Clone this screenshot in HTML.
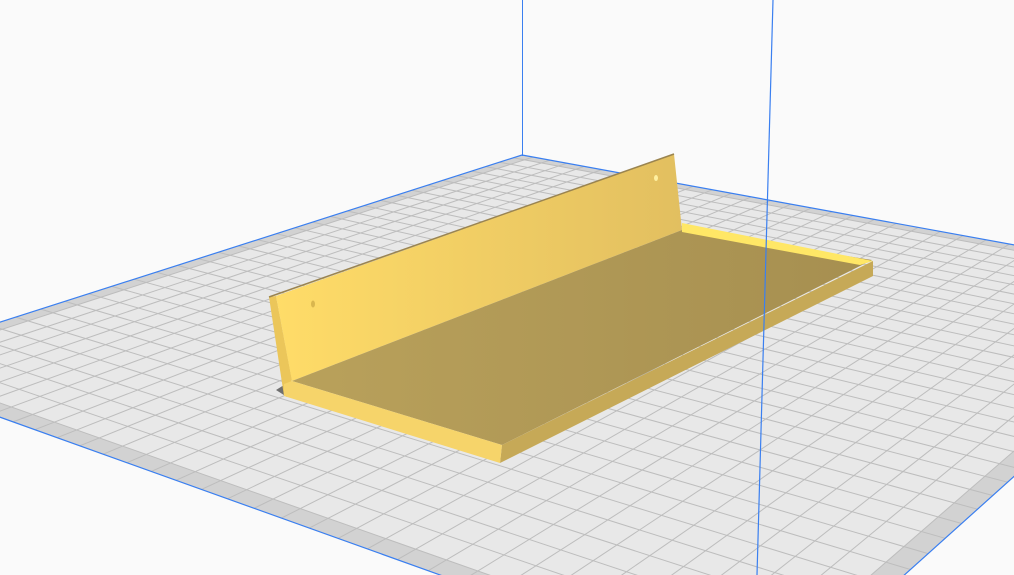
<!DOCTYPE html>
<html><head><meta charset="utf-8"><style>
html,body{margin:0;padding:0;background:#fafafa;overflow:hidden;width:1014px;height:575px}
svg{display:block}
</style></head><body>
<svg id="s" width="1014" height="575" viewBox="0 0 1014 575" xmlns="http://www.w3.org/2000/svg">
<defs>
<linearGradient id="wall" x1="0" y1="0" x2="1" y2="0"><stop offset="0" stop-color="#ffdc68"/><stop offset="1" stop-color="#e2bf60"/></linearGradient>
<linearGradient id="floor" x1="0" y1="0" x2="1" y2="0"><stop offset="0" stop-color="#b9a15b"/><stop offset="1" stop-color="#a68f50"/></linearGradient>
</defs>
<rect width="1014" height="575" fill="#fafafa"/>
<g id="plate"></g>
<line x1="522.5" y1="0" x2="522.5" y2="156" stroke="#3a7ff0" stroke-width="1"/>
<polygon points="276,390 284,385 287,397" fill="#6f6f6f"/>
<polygon points="269,297 276,296 292,380 284,396" fill="#ebc65a"/>
<polygon points="276,296 674,154 682,230 292,381" fill="url(#wall)"/>
<line x1="269" y1="297" x2="674" y2="154" stroke="#9a8450" stroke-width="1.5"/>
<polygon points="292,381 682,230 872,260 502,445" fill="url(#floor)"/>
<polygon points="682,223 873,261 860,265 682,232" fill="#ffe766"/>
<polygon points="502,445 873,261 873,276 500,463" fill="#c6a957"/>
<polygon points="284,384 292,381 502,445 500,463 284,396" fill="#f6d46a"/>
<ellipse cx="313" cy="304" rx="2" ry="3.5" fill="#d9b64e"/>
<ellipse cx="656" cy="178" rx="2" ry="3" fill="#fff0a0"/>
<line x1="773" y1="0" x2="757" y2="575" stroke="#3a7ff0" stroke-width="1.2"/>
</svg>
<script>
(function(){
var B=[522,155],R=[1228,284],F=[772,694],L=[-140,367];
var x0=B[0],y0=B[1],x1=R[0],y1=R[1],x2=F[0],y2=F[1],x3=L[0],y3=L[1];
var dx1=x1-x2,dx2=x3-x2,dx3=x0-x1+x2-x3,dy1=y1-y2,dy2=y3-y2,dy3=y0-y1+y2-y3;
var den=dx1*dy2-dy1*dx2;
var g=(dx3*dy2-dy3*dx2)/den,h=(dx1*dy3-dy1*dx3)/den;
var a=x1-x0+g*x1,b=x3-x0+h*x3,c=x0,d=y1-y0+g*y1,e=y3-y0+h*y3,f=y0;
function P(u,v){var w=g*u+h*v+1;return [(a*u+b*v+c)/w,(d*u+e*v+f)/w];}
function poly(pts,fill,extra){return '<polygon points="'+pts.map(function(p){return p[0].toFixed(1)+','+p[1].toFixed(1)}).join(' ')+'" fill="'+fill+'" '+(extra||'')+'/>';}
var s='';
s+=poly([P(0,0),P(1,0),P(1,1),P(0,1)],'#d2d2d2');
var m=0.02;
s+=poly([P(m,m),P(1-m,m),P(1-m,1-m),P(m,1-m)],'#e8e8e8');
var N=32;
for(var i=0;i<=N;i++){
 var t=m+(1-2*m)*i/N;
 var p=P(t,0),q=P(t,1);
 s+='<line x1="'+p[0].toFixed(1)+'" y1="'+p[1].toFixed(1)+'" x2="'+q[0].toFixed(1)+'" y2="'+q[1].toFixed(1)+'" stroke="#bdbdbd" stroke-width="1"/>';
 p=P(0,t);q=P(1,t);
 s+='<line x1="'+p[0].toFixed(1)+'" y1="'+p[1].toFixed(1)+'" x2="'+q[0].toFixed(1)+'" y2="'+q[1].toFixed(1)+'" stroke="#bdbdbd" stroke-width="1"/>';
}
s+=poly([P(0,0),P(1,0),P(1,1),P(0,1)],'none','stroke="#3a7ff0" stroke-width="1.2"');
document.getElementById('plate').innerHTML=s;
})();
</script>
</body></html>
